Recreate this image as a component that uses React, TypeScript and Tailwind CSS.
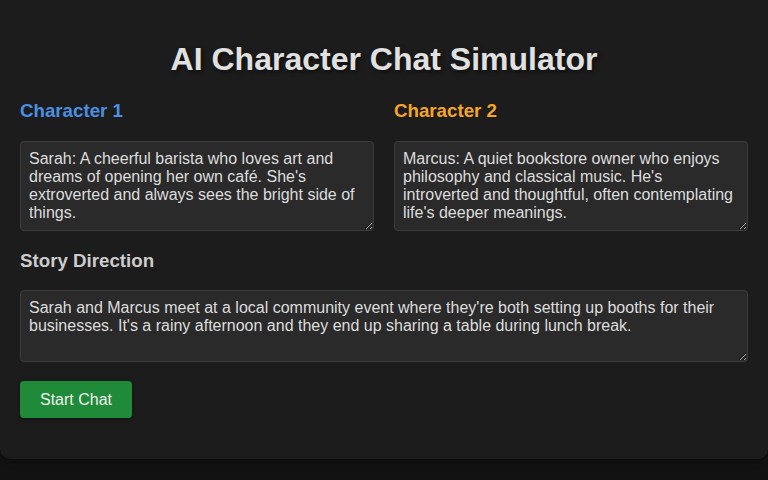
import React from "react";

const font = { fontFamily: '"Liberation Sans", Arial, sans-serif' };

export default function App() {
  return (
    <div className="min-h-[480px] bg-[#121212]" style={font}>
      <div className="rounded-b-[10px] bg-[#1c1c1c] px-5 pb-[41px] shadow-[0_0_10px_rgba(0,0,0,0.5)]">
        <h1 className="pt-[41px] pb-[22px] text-center text-[32px] font-bold leading-[37px] text-[#e0e0e0] [text-shadow:2px_2px_4px_rgba(0,0,0,0.5)]">
          AI Character Chat Simulator
        </h1>
        <div className="grid grid-cols-2 gap-5">
          <div className="flex flex-col">
            <h3 className="mb-[19px] text-[18.72px] font-bold leading-[22px] text-[#4a90e2]">Character 1</h3>
            <textarea
              className="h-[90px] w-full resize-y rounded-[4px] border border-[#3c3c3c] bg-[#2a2a2a] px-2 py-2 text-[16px] leading-[18px] text-[#dddddd] outline-none"
              defaultValue="Sarah: A cheerful barista who loves art and dreams of opening her own café. She's extroverted and always sees the bright side of things."
            />
          </div>
          <div className="flex flex-col">
            <h3 className="mb-[19px] text-[18.72px] font-bold leading-[22px] text-[#f5a623]">Character 2</h3>
            <textarea
              className="h-[90px] w-full resize-y rounded-[4px] border border-[#3c3c3c] bg-[#2a2a2a] px-2 py-2 text-[16px] leading-[18px] text-[#dddddd] outline-none"
              defaultValue="Marcus: A quiet bookstore owner who enjoys philosophy and classical music. He's introverted and thoughtful, often contemplating life's deeper meanings."
            />
          </div>
        </div>
        <h3 className="mt-[19px] mb-[18px] text-[18.72px] font-bold leading-[22px] text-[#cccccc]">Story Direction</h3>
        <textarea
          className="block h-[72px] w-full resize-y rounded-[4px] border border-[#3c3c3c] bg-[#2a2a2a] px-2 py-2 text-[16px] leading-[18px] text-[#dddddd] outline-none"
          defaultValue="Sarah and Marcus meet at a local community event where they're both setting up booths for their businesses. It's a rainy afternoon and they end up sharing a table during lunch break."
        />
        <button className="mt-[19px] h-[37px] rounded-[4px] bg-[#1f8a38] px-5 text-[16px] text-[#f0f0f0] shadow-[0_2px_4px_rgba(0,0,0,0.3)]">
          Start Chat
        </button>
      </div>
    </div>
  );
}
